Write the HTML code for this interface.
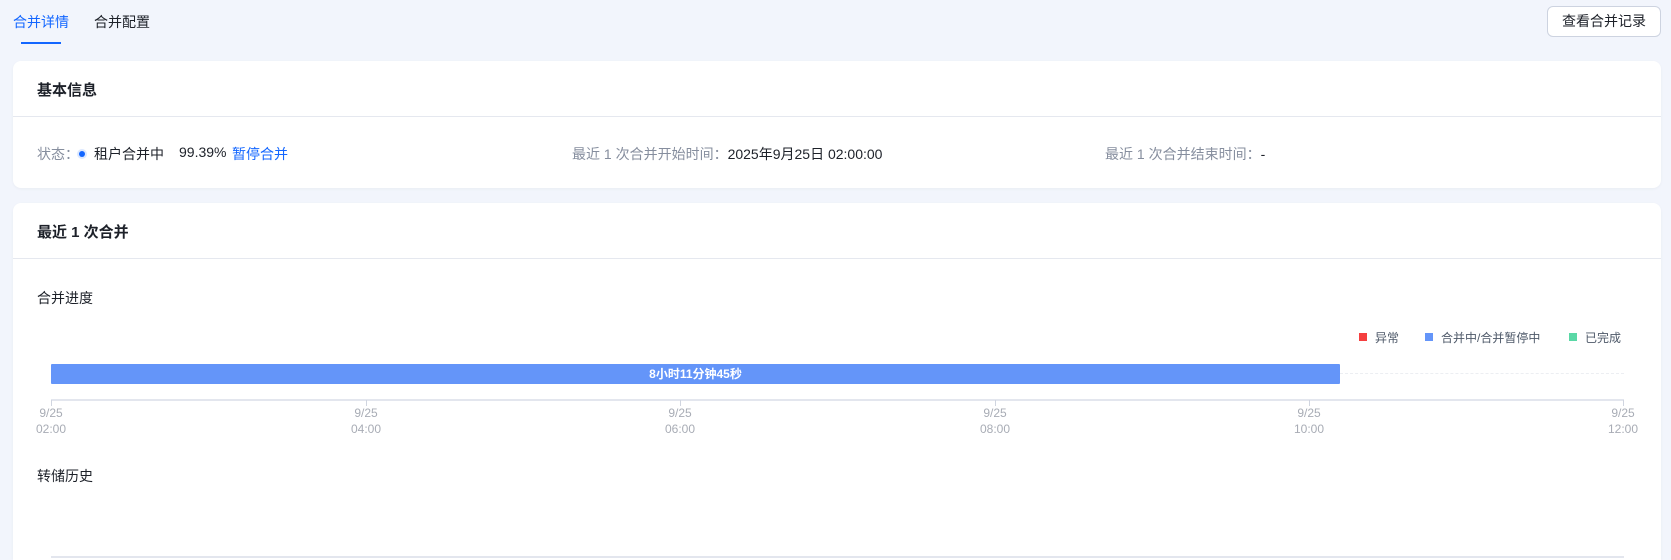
<!DOCTYPE html>
<html style="height:560px;overflow:hidden"><head><meta charset="utf-8"><style>
*{margin:0;padding:0;box-sizing:border-box}
body{width:1671px;height:560px;overflow:hidden;background:#f2f5fc;font-family:"Liberation Sans","Noto Sans CJK SC",sans-serif;font-size:14px;color:#1d2129;position:relative}
.a{position:absolute;white-space:nowrap}
.card{position:absolute;left:13px;width:1648px;background:#fff;border-radius:8px;box-shadow:0 1px 3px rgba(0,0,0,.04)}
.g{color:#868e9e}
.ax{color:#a8acb5;font-size:12px;text-align:center;line-height:16px;width:60px}
.tk{position:absolute;top:400px;width:1px;height:6px;background:#d0d5e0}
</style></head><body>
<div class="a" style="left:13px;top:12px;color:#1366ff">合并详情</div>
<div class="a" style="left:21px;top:42px;width:40px;height:2px;background:#1366ff"></div>
<div class="a" style="left:94px;top:12px">合并配置</div>
<div class="a" style="left:1547px;top:6px;width:114px;height:31px;border:1px solid #cdd3e0;border-radius:6px;background:#fff;text-align:center;line-height:29px">查看合并记录</div>

<div class="card" style="top:61px;height:127px">
 <div class="a" style="left:24px;top:18px;font-weight:bold;font-size:15px">基本信息</div>
 <div class="a" style="left:0;top:55px;width:1648px;height:1px;background:#e5e8ef"></div>
 <div class="a g" style="left:24px;top:83px">状态：</div>
 <div class="a" style="left:66px;top:90px;width:6px;height:6px;border-radius:50%;background:#1366ff;box-shadow:0 0 0 2px #dce8ff"></div>
 <div class="a" style="left:81px;top:83px">租户合并中</div>
 <div class="a" style="left:166px;top:83px">99.39%</div>
 <div class="a" style="left:219px;top:83px;color:#1366ff">暂停合并</div>
 <div class="a" style="left:559px;top:83px"><span class="g">最近 1 次合并开始时间：</span>2025年9月25日 02:00:00</div>
 <div class="a" style="left:1092px;top:83px"><span class="g">最近 1 次合并结束时间：</span>-</div>
</div>

<div class="card" style="top:203px;height:357px;border-bottom-left-radius:0;border-bottom-right-radius:0">
 <div class="a" style="left:24px;top:18px;font-weight:bold;font-size:15px">最近 1 次合并</div>
 <div class="a" style="left:0;top:55px;width:1648px;height:1px;background:#e5e8ef"></div>
 <div class="a" style="left:24px;top:85px">合并进度</div>
 <div class="a" style="left:24px;top:263px">转储历史</div>
</div>

<div class="a" style="left:1359px;top:333px;width:8px;height:8px;background:#f53f3f"></div>
<div class="a" style="left:1375px;top:329px;font-size:12px;color:#4e5969">异常</div>
<div class="a" style="left:1425px;top:333px;width:8px;height:8px;background:#6495f9"></div>
<div class="a" style="left:1441px;top:329px;font-size:12px;color:#4e5969">合并中/合并暂停中</div>
<div class="a" style="left:1569px;top:333px;width:8px;height:8px;background:#5ad8a6"></div>
<div class="a" style="left:1585px;top:329px;font-size:12px;color:#4e5969">已完成</div>

<div class="a" style="left:1340px;top:373px;width:284px;border-top:1px dashed #eceef2"></div>
<div class="a" style="left:51px;top:364px;width:1289px;height:20px;background:#6495f9;border-radius:1px;color:#fff;font-size:12px;font-weight:bold;text-align:center;line-height:20px">8小时11分钟45秒</div>
<div class="a" style="left:51px;top:399px;width:1573px;height:2px;background:#e3e6ee"></div>
<div class="tk" style="left:51px"></div><div class="tk" style="left:366px"></div><div class="tk" style="left:680px"></div><div class="tk" style="left:995px"></div><div class="tk" style="left:1309px"></div><div class="tk" style="left:1623px"></div>
<div class="a ax" style="left:21px;top:405px">9/25<br>02:00</div>
<div class="a ax" style="left:336px;top:405px">9/25<br>04:00</div>
<div class="a ax" style="left:650px;top:405px">9/25<br>06:00</div>
<div class="a ax" style="left:965px;top:405px">9/25<br>08:00</div>
<div class="a ax" style="left:1279px;top:405px">9/25<br>10:00</div>
<div class="a ax" style="left:1593px;top:405px">9/25<br>12:00</div>
<div class="a" style="left:51px;top:556px;width:1573px;height:2px;background:#e3e6ee"></div>
</body></html>
